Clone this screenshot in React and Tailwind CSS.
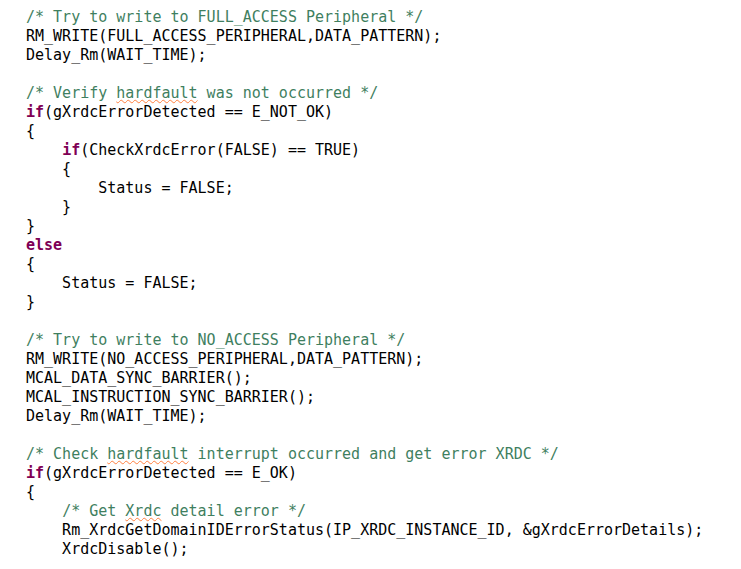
import React from 'react';

// token kinds: c = comment, k = keyword, t = plain text, s = misspelled word in a comment
const lines = [
  [['c', '/* Try to write to FULL_ACCESS Peripheral */']],
  [['t', 'RM_WRITE(FULL_ACCESS_PERIPHERAL,DATA_PATTERN);']],
  [['t', 'Delay_Rm(WAIT_TIME);']],
  [],
  [['c', '/* Verify '], ['s', 'hardfault'], ['c', ' was not occurred */']],
  [['k', 'if'], ['t', '(gXrdcErrorDetected == E_NOT_OK)']],
  [['t', '{']],
  [['t', '    '], ['k', 'if'], ['t', '(CheckXrdcError(FALSE) == TRUE)']],
  [['t', '    {']],
  [['t', '        Status = FALSE;']],
  [['t', '    }']],
  [['t', '}']],
  [['k', 'else']],
  [['t', '{']],
  [['t', '    Status = FALSE;']],
  [['t', '}']],
  [],
  [['c', '/* Try to write to NO_ACCESS Peripheral */']],
  [['t', 'RM_WRITE(NO_ACCESS_PERIPHERAL,DATA_PATTERN);']],
  [['t', 'MCAL_DATA_SYNC_BARRIER();']],
  [['t', 'MCAL_INSTRUCTION_SYNC_BARRIER();']],
  [['t', 'Delay_Rm(WAIT_TIME);']],
  [],
  [['c', '/* Check '], ['s', 'hardfault'], ['c', ' interrupt occurred and get error XRDC */']],
  [['k', 'if'], ['t', '(gXrdcErrorDetected == E_OK)']],
  [['t', '{']],
  [['t', '    '], ['c', '/* Get '], ['s', 'Xrdc'], ['c', ' detail error */']],
  [['t', '    Rm_XrdcGetDomainIDErrorStatus(IP_XRDC_INSTANCE_ID, &gXrdcErrorDetails);']],
  [['t', '    XrdcDisable();']],
];

function Token({ kind, text }) {
  if (kind === 'c') return <span className="text-[#3f7f5f]">{text}</span>;
  if (kind === 'k') return <span className="font-bold text-[#7f0055]">{text}</span>;
  if (kind === 's')
    return (
      <span className="text-[#3f7f5f] underline decoration-wavy decoration-[#ff8040] decoration-[1px] underline-offset-[1px]">
        {text}
      </span>
    );
  return <span>{text}</span>;
}

export default function App() {
  return (
    <div className="w-[741px] h-[569px] overflow-hidden bg-white pl-[26px] pt-[8px]">
      <pre className="font-['DejaVu_Sans_Mono',monospace] text-[15px] leading-[19px] text-black">
        {lines.map((toks, i) => (
          <div key={i} className="h-[19px]">
            {toks.map(([kind, text], j) => (
              <Token key={j} kind={kind} text={text} />
            ))}
          </div>
        ))}
      </pre>
    </div>
  );
}
